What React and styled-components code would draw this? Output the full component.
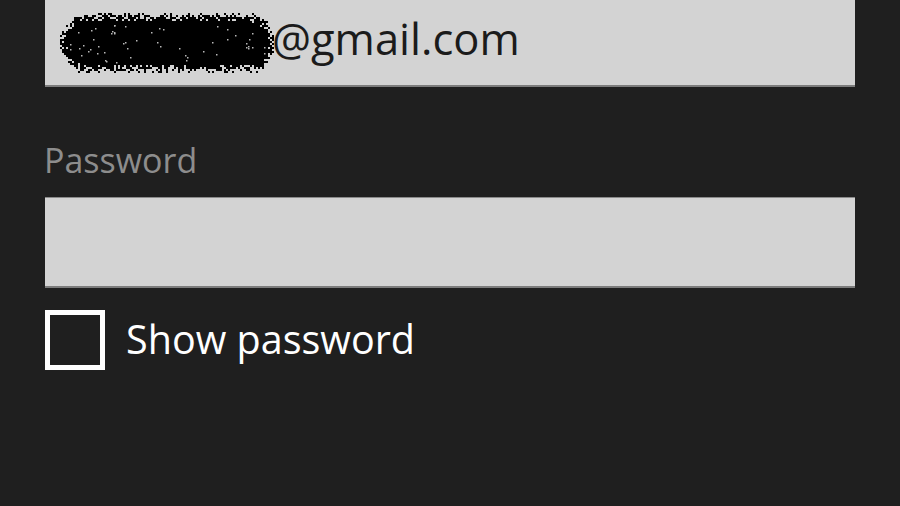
import React from 'react'
import styled, { createGlobalStyle } from 'styled-components'

const GlobalStyle = createGlobalStyle`
  html, body {
    margin: 0;
    padding: 0;
    background: #1f1f1f;
    overflow: hidden;
  }
  body {
    font-family: 'Open Sans', 'Noto Sans', 'DejaVu Sans', sans-serif;
  }
`

// mulberry32, so the scribble is the same on every render
const makeRand = (seed) => () => {
  seed |= 0
  seed = (seed + 0x6d2b79f5) | 0
  let t = Math.imul(seed ^ (seed >>> 15), 1 | seed)
  t = (t + Math.imul(t ^ (t >>> 7), 61 | t)) ^ t
  return ((t ^ (t >>> 14)) >>> 0) / 4294967296
}

const buildScribble = (w, h, cell) => {
  const rand = makeRand(4242)
  const rects = []
  const dots = []
  const cy = h / 2
  const r = h / 2 - 4
  const dist = (x, y) => {
    const cx = Math.min(Math.max(x, r + 2), w - r - 2)
    const dx = x - cx
    const dy = y - cy
    return Math.sqrt(dx * dx + dy * dy) - r
  }
  for (let y = 0; y < h; y += cell) {
    let runStart = -1
    for (let x = 0; x <= w; x += cell) {
      // stadium shape with ragged edges
      const edge = dist(x, y + cell / 2) + (rand() - 0.5) * 10
      const on = x < w && edge < 0
      if (on && runStart < 0) runStart = x
      if (!on && runStart >= 0) {
        rects.push([runStart, y, x - runStart])
        runStart = -1
      }
    }
  }
  // light speckles inside the blob
  for (let i = 0; i < 90; i++) {
    const x = Math.round(rand() * w)
    const y = Math.round(rand() * h)
    if (dist(x, y) < -5) dots.push([x, y])
  }
  return { rects, dots }
}

const Scribble = ({ width = 214, height = 60 }) => {
  const { rects, dots } = React.useMemo(
    () => buildScribble(width, height, 2),
    [width, height]
  )
  return (
    <ScribbleSvg width={width} height={height} viewBox={`0 0 ${width} ${height}`}>
      {rects.map(([x, y, w], i) => (
        <rect key={i} x={x} y={y} width={w} height={2} fill='#000' />
      ))}
      {dots.map(([x, y], i) => (
        <rect key={'d' + i} x={x} y={y} width={1.5} height={1.5} fill='#b8b8b8' />
      ))}
    </ScribbleSvg>
  )
}

const App = () => {
  const [show, setShow] = React.useState(false)
  return (
    <>
      <GlobalStyle />
      <Form>
        <Field>
          <Scribble />
          <Value>@gmail.com</Value>
        </Field>
        <Label>Password</Label>
        <Field as='input' type={show ? 'text' : 'password'} aria-label='Password' />
        <CheckRow>
          <Box
            type='checkbox'
            checked={show}
            onChange={(e) => setShow(e.target.checked)}
          />
          <CheckText>Show password</CheckText>
        </CheckRow>
      </Form>
    </>
  )
}

const Form = styled.form`
  display: flex;
  flex-direction: column;
  width: 810px;
  margin: -4px 0 0 45px;
`

const Field = styled.div`
  box-sizing: border-box;
  display: flex;
  align-items: center;
  width: 100%;
  height: 91px;
  padding: 0 0 0 15px;
  margin: 0;
  background: #d3d3d3;
  border: none;
  border-top: 1px solid #8a8a8a;
  border-bottom: 2px solid #7c7c7c;
  outline: none;
  font-family: inherit;
  font-size: 40px;
  color: #1b1b1b;
`

const ScribbleSvg = styled.svg`
  display: block;
  flex: none;
  margin-top: 3px;
`

const Value = styled.span`
  margin-left: -2px;
  font-size: 43.5px;
  line-height: 1;
  color: #1b1b1b;
  padding-bottom: 5px;
`

const Label = styled.label`
  margin: 50px 0 0 -1px;
  font-size: 34px;
  line-height: 46px;
  color: #8d8d8d;
  height: 60px;
`

const CheckRow = styled.label`
  display: flex;
  align-items: center;
  gap: 21px;
  margin-top: 22px;
  cursor: pointer;
`

const Box = styled.input`
  appearance: none;
  box-sizing: border-box;
  width: 60px;
  height: 60px;
  margin: 0;
  border: 5.5px solid #ffffff;
  background: #1f1f1f;
  &:checked {
    background: #ffffff;
  }
`

const CheckText = styled.span`
  font-size: 39.5px;
  line-height: 1;
  color: #ffffff;
  padding-bottom: 0;
`

export default App
